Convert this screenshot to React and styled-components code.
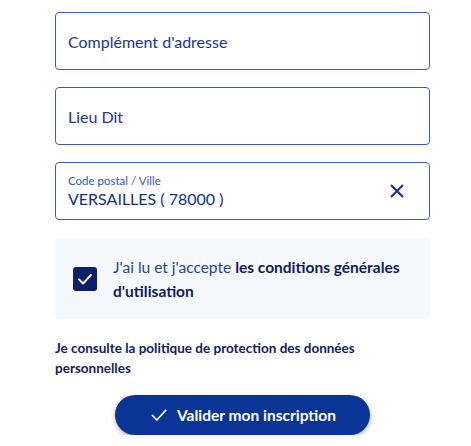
import React from 'react';
import styled, { createGlobalStyle } from 'styled-components';

const Global = createGlobalStyle`
  body {
    margin: 0;
    background: #fff;
    font-family: Lato, "Liberation Sans", sans-serif;
  }
`;

const Form = styled.div`
  width: 375px;
  margin-left: 55px;
  padding-top: 12px;
  display: flex;
  flex-direction: column;
`;

const Field = styled.div`
  box-sizing: border-box;
  height: 58px;
  border: 1px solid #3a5cb8;
  border-radius: 4px;
  padding: 0 12px;
  display: flex;
  align-items: center;
  justify-content: space-between;
  margin-bottom: ${p => p.$gap || 17}px;
  color: #1b3690;
  font-size: 16px;
`;

const Stack = styled.div`
  display: flex;
  flex-direction: column;
`;

const Label = styled.span`
  font-size: 11.5px;
  color: #3b58a8;
  line-height: 14px;
  margin-top: 2px;
`;

const Value = styled.span`
  font-size: 16px;
  line-height: 22px;
  color: #12308a;
`;

const Clear = styled.button`
  border: 0;
  background: none;
  padding: 0;
  margin-right: 13px;
  display: flex;
  cursor: pointer;
`;

const Consent = styled.div`
  background: #f5f8fc;
  border-radius: 4px;
  height: 81px;
  box-sizing: border-box;
  padding: 0 20px 0 18px;
  display: flex;
  align-items: center;
  gap: 16px;
`;

const Box = styled.span`
  flex: none;
  width: 24px;
  height: 24px;
  border-radius: 3px;
  background: #0d1f6b;
  display: flex;
  align-items: center;
  justify-content: center;
`;

const ConsentText = styled.p`
  margin: 0;
  font-size: 15.5px;
  line-height: 24px;
  color: #2a3f9f;
  b {
    color: #131b5c;
    font-weight: 700;
  }
`;

const Policy = styled.p`
  margin: 19px 0 0;
  font-size: 13.5px;
  line-height: 20px;
  font-weight: 700;
  color: #131b5c;
`;

const Submit = styled.button`
  align-self: center;
  margin-top: 17px;
  width: 255px;
  height: 40px;
  border: 0;
  border-radius: 20px;
  background: #0a3597;
  color: #fff;
  font-family: inherit;
  font-size: 15.5px;
  font-weight: 700;
  display: flex;
  align-items: center;
  justify-content: center;
  gap: 8px;
  box-shadow: 0 2px 5px rgba(0, 0, 0, 0.3);
`;

const Check = ({ size, w }) => (
  <svg width={size} height={size} viewBox="0 0 24 24" fill="none" stroke="#fff" strokeWidth={w} strokeLinecap="round" strokeLinejoin="round">
    <path d="M4 12.5l5.5 5.5L20 6.5" />
  </svg>
);

export default function App() {
  return (
    <>
      <Global />
      <Form>
        <Field>Complément d'adresse</Field>
        <Field>Lieu Dit</Field>
        <Field $gap={18}>
          <Stack>
            <Label>Code postal / Ville</Label>
            <Value>VERSAILLES ( 78000 )</Value>
          </Stack>
          <Clear aria-label="Effacer">
            <svg width="14" height="14" viewBox="0 0 14 14" stroke="#1b3690" strokeWidth="2.2">
              <path d="M1 1l12 12M13 1L1 13" />
            </svg>
          </Clear>
        </Field>
        <Consent>
          <Box><Check size={18} w={2.6} /></Box>
          <ConsentText>
            J'ai lu et j'accepte <b>les conditions générales d'utilisation</b>
          </ConsentText>
        </Consent>
        <Policy>Je consulte la politique de protection des données personnelles</Policy>
        <Submit>
          <Check size={20} w={2} />
          Valider mon inscription
        </Submit>
      </Form>
    </>
  );
}
